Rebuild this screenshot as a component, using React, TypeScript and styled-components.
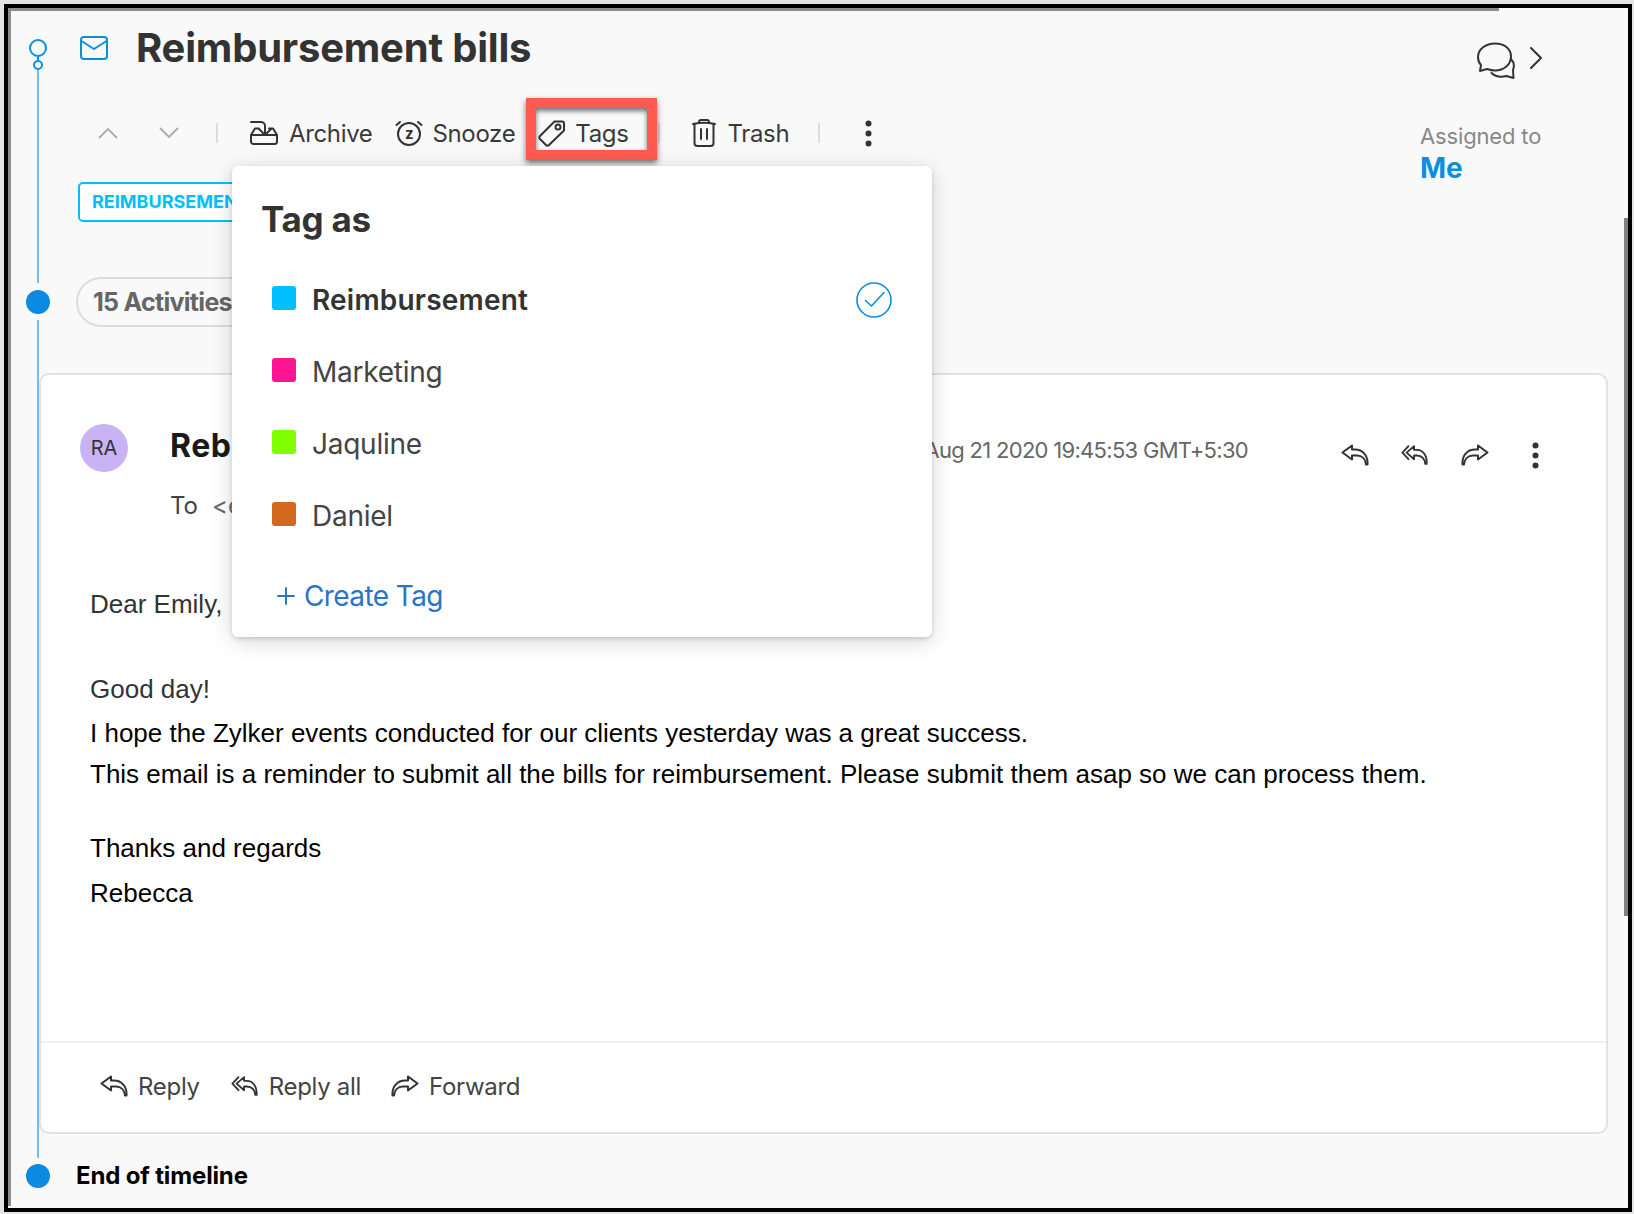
import styled, { createGlobalStyle } from 'styled-components';

const Global = createGlobalStyle`
  html, body {
    margin: 0;
    padding: 0;
    background: #e4e4e4;
  }
  * {
    box-sizing: border-box;
  }
`;

const Sheet = styled.div`
  width: 1634px;
  height: 1214px;
  padding: 4px 2px 2px 4px;
  background: #e4e4e4;
  font-family: Inter, 'Noto Sans', sans-serif;
  color: #333;
  overflow: hidden;
`;

const Frame = styled.div`
  position: relative;
  width: 1628px;
  height: 1208px;
  border: 4px solid #000;
  background: #f9f9f9;
  display: grid;
  grid-template-columns: 60px 1fr;
  overflow: hidden;

  &::before {
    content: '';
    position: absolute;
    left: 0;
    top: 0;
    width: 1488px;
    height: 1195px;
    border-top: 3px solid #8c8c8c;
    border-left: 3px solid #8c8c8c;
    pointer-events: none;
  }
`;

const ScrollGrip = styled.div`
  position: absolute;
  right: 0;
  top: 210px;
  width: 4px;
  height: 698px;
  background: #808080;
`;

const Rail = styled.div`
  display: flex;
  flex-direction: column;
  align-items: center;
  padding-top: 31px;
`;

const Ring = styled.div<{ $size: number }>`
  flex: none;
  width: ${(p) => p.$size}px;
  height: ${(p) => p.$size}px;
  border: 2.5px solid #0a8fdf;
  border-radius: 50%;
`;

const RailLine = styled.div<{ $h: number; $gap?: number; $strong?: boolean }>`
  width: 2px;
  height: ${(p) => p.$h}px;
  margin-bottom: ${(p) => p.$gap ?? 0}px;
  background: ${(p) => (p.$strong ? '#0a8fdf' : '#79b9ec')};
`;

const RailDot = styled.div<{ $gap?: number }>`
  width: 24px;
  height: 24px;
  margin-bottom: ${(p) => p.$gap ?? 0}px;
  border-radius: 50%;
  background: #0a8ae0;
`;

const Content = styled.div`
  display: flex;
  flex-direction: column;
  min-width: 0;
`;

const Top = styled.div`
  display: flex;
  height: 319px;
`;

const LeftCol = styled.div`
  flex: 1;
  min-width: 0;
`;

const TitleRow = styled.div`
  display: flex;
  align-items: center;
  gap: 28px;
  height: 48px;
  margin-top: 16px;
  padding-left: 12px;
`;

const Title = styled.h1`
  margin: 0;
  font-size: 40px;
  font-weight: 700;
  line-height: 48px;
  letter-spacing: -0.2px;
  color: #333;
`;

const Toolbar = styled.div`
  display: flex;
  align-items: center;
  height: 40px;
  margin-top: 41px;
  padding-left: 30px;
`;

const ToolButton = styled.div<{ $mr: number; $gap?: number }>`
  position: relative;
  display: flex;
  align-items: center;
  gap: ${(p) => p.$gap ?? 11}px;
  height: 40px;
  margin-right: ${(p) => p.$mr}px;
  font-size: 24px;
  color: #3a3a3a;
  letter-spacing: -0.35px;
`;

const Chevron = styled.svg<{ $mr: number }>`
  width: 20px;
  height: 12px;
  margin-right: ${(p) => p.$mr}px;
  fill: none;
  stroke: #ababab;
  stroke-width: 1.8;
`;

const Divider = styled.div<{ $mr: number }>`
  width: 2px;
  height: 20px;
  margin-right: ${(p) => p.$mr}px;
  background: #dcdcdc;
`;

const Highlight = styled.div`
  position: absolute;
  left: -12px;
  right: -28px;
  top: -15px;
  bottom: -7px;
  border: 10px solid #fe5a4f;
  box-shadow: 0 3px 6px rgba(0, 0, 0, 0.55), inset 0 3px 5px rgba(0, 0, 0, 0.55);
`;

const Chip = styled.div`
  display: inline-flex;
  align-items: center;
  height: 40px;
  margin: 29px 0 0 10px;
  padding: 0 12px 2px;
  border: 2px solid #00bfff;
  border-radius: 5px;
  font-size: 18px;
  font-weight: 700;
  color: #00bfff;
  background: #fff;
`;

const Pill = styled.div`
  width: 260px;
  height: 50px;
  margin: 55px 0 0 8px;
  padding-left: 15px;
  border: 2px solid #dcdcdc;
  border-radius: 25px;
  font-size: 25px;
  font-weight: 700;
  line-height: 46px;
  color: #666;
  letter-spacing: -0.7px;
`;

const RightCol = styled.div`
  width: 208px;
  flex: none;
`;

const ChatRow = styled.div`
  display: flex;
  align-items: flex-start;
  gap: 15px;
  height: 37px;
  margin-top: 34px;
  padding-left: 57px;
`;

const AssignedLabel = styled.div`
  margin-top: 43px;
  font-size: 22px;
  line-height: 28px;
  color: #888;
  letter-spacing: -0.15px;
`;

const AssignedName = styled.div`
  margin-top: 2px;
  font-size: 28px;
  font-weight: 700;
  line-height: 32px;
  color: #0a8fdf;
`;

const Card = styled.div`
  display: flex;
  flex-direction: column;
  width: 1569px;
  height: 761px;
  margin: 46px 0 0 -29px;
  border: 2px solid #e2e2e2;
  border-radius: 10px;
  background: #fff;
`;

const MailHead = styled.div`
  display: flex;
  align-items: flex-start;
  height: 196px;
  padding: 49px 0 0 39px;
`;

const Avatar = styled.div`
  display: flex;
  align-items: center;
  justify-content: center;
  flex: none;
  width: 48px;
  height: 48px;
  border-radius: 50%;
  background: #c9b3f5;
  font-size: 20px;
  color: #333;
`;

const Sender = styled.div`
  flex: 1;
  margin: 2px 0 0 42px;
`;

const SenderName = styled.div`
  font-size: 32px;
  font-weight: 700;
  line-height: 40px;
  color: #1a1a1a;
  letter-spacing: 0.5px;
`;

const SenderTo = styled.div`
  display: flex;
  gap: 14px;
  margin-top: 24px;
  font-size: 24px;
  line-height: 32px;
  color: #444;

  span + span {
    color: #666;
  }
`;

const MailDate = styled.div`
  margin-right: 93px;
  padding-top: 11px;
  font-size: 22px;
  line-height: 30px;
  color: #666;
  letter-spacing: -0.7px;
`;

const MailActions = styled.div`
  display: flex;
  align-items: center;
  gap: 32px;
  height: 22px;
  margin: 20px 67px 0 0;
`;

const Kebab = styled.svg<{ $ml?: number }>`
  width: 7px;
  height: 27px;
  margin-left: ${(p) => p.$ml ?? 0}px;
  fill: #333;
`;

const Body = styled.div`
  flex: 1;
  padding: 0 0 0 49px;
  font-family: 'Liberation Sans', Arial, sans-serif;
  font-size: 26px;
  line-height: 40px;
  color: #000;
`;

const Line = styled.div<{ $gap: number; $soft?: boolean }>`
  margin-top: ${(p) => p.$gap}px;
  color: ${(p) => (p.$soft ? '#333' : '#000')};
`;

const MailFooter = styled.div`
  display: flex;
  align-items: center;
  height: 91px;
  padding: 0 0 3px 59px;
  border-top: 2px solid #f0f0f0;
  font-size: 24px;
  color: #444;
`;

const FooterAction = styled.div<{ $mr: number }>`
  display: flex;
  align-items: center;
  gap: 10px;
  margin-right: ${(p) => p.$mr}px;
  letter-spacing: -0.3px;
`;

const EndRow = styled.div`
  height: 24px;
  margin: 30px 0 0 8px;
  font-size: 24px;
  font-weight: 700;
  line-height: 24px;
  color: #000;
  letter-spacing: -0.15px;
`;

const Popup = styled.div`
  position: absolute;
  left: 224px;
  top: 158px;
  width: 700px;
  height: 471px;
  padding: 29px 0 0 29px;
  border-radius: 6px;
  background: #fff;
  box-shadow: 0 2px 4px rgba(0, 0, 0, 0.14), 0 4px 22px rgba(0, 0, 0, 0.16);
`;

const PopupTitle = styled.div`
  font-size: 35px;
  font-weight: 700;
  line-height: 48px;
  color: #333;
  letter-spacing: -0.25px;
`;

const TagList = styled.div`
  margin-top: 19px;
`;

const TagRow = styled.div`
  display: flex;
  align-items: center;
  height: 72px;
  padding: 0 40px 0 11px;
`;

const Swatch = styled.div<{ $color: string }>`
  flex: none;
  width: 24px;
  height: 24px;
  border-radius: 3px;
  background: ${(p) => p.$color};
`;

const TagName = styled.div<{ $active?: boolean }>`
  flex: 1;
  margin: 4px 0 0 16px;
  font-size: 28px;
  font-weight: ${(p) => (p.$active ? 600 : 400)};
  color: ${(p) => (p.$active ? '#333' : '#444')};
  letter-spacing: ${(p) => (p.$active ? '0.2px' : '-0.25px')};
`;

const CheckMark = styled.svg`
  flex: none;
  width: 36px;
  height: 36px;
  margin-top: 4px;
  fill: none;
  stroke: #0a8fdf;
  stroke-width: 1.6;
  stroke-linecap: round;
  stroke-linejoin: round;
`;

const CreateTag = styled.div`
  display: flex;
  align-items: center;
  gap: 9px;
  margin: 22px 0 0 16px;
  height: 48px;
  font-size: 28px;
  color: #2a74c5;
  letter-spacing: -0.6px;
`;

const Icon = styled.svg<{ $flip?: boolean }>`
  flex: none;
  fill: none;
  stroke: currentColor;
  stroke-width: 2;
  stroke-linecap: round;
  stroke-linejoin: round;
  transform: ${(p) => (p.$flip ? 'scaleX(-1)' : 'none')};
`;

const ReplyIcon = ({ flip }: { flip?: boolean }) => (
  <Icon $flip={flip} width="28" height="22" viewBox="0 0 28 22" color="#333">
    <path d="M11 1.5 1.500 8.500 11 15.500v-4h5c5 0 8.500 3.500 9 9h1.500c.7-9-5-15-12.500-15H11z" />
  </Icon>
);

const ReplyAllIcon = () => (
  <Icon width="28" height="22" viewBox="0 0 30 22" color="#333">
    <path d="M8 1.500 1.500 8.500 8 15.500" />
    <path d="M14 1.500 6 8.500 14 15.500v-4h3c5 0 8.500 3.500 9 9h1.500c.7-9-4-15-10.500-15H14z" />
  </Icon>
);

const KebabIcon = ({ ml }: { ml?: number }) => (
  <Kebab $ml={ml} viewBox="0 0 7 27">
    <circle cx="3.500" cy="3.500" r="3" />
    <circle cx="3.500" cy="13.500" r="3" />
    <circle cx="3.500" cy="23.500" r="3" />
  </Kebab>
);

const tags = [
  { name: 'Reimbursement', color: '#00bfff', active: true },
  { name: 'Marketing', color: '#ff1493' },
  { name: 'Jaquline', color: '#7fff00' },
  { name: 'Daniel', color: '#d2691e' },
];

export default function App() {
  return (
    <Sheet>
      <Global />
      <Frame>
        <Rail>
          <Ring $size={18} />
          <RailLine $h={3} $strong />
          <Ring $size={10} />
          <RailLine $h={213} $gap={7} />
          <RailDot $gap={6} />
          <RailLine $h={838} $gap={6} />
          <RailDot />
        </Rail>

        <Content>
          <Top>
            <LeftCol>
              <TitleRow>
                <Icon width="28" height="24" viewBox="0 0 28 24" color="#0a8fdf">
                  <rect x="1" y="1" width="26" height="22" rx="3" />
                  <path d="M1.500 5 14 13 26.500 5" />
                </Icon>
                <Title>Reimbursement bills</Title>
              </TitleRow>

              <Toolbar>
                <Chevron $mr={41} viewBox="0 0 20 12">
                  <path d="M1 11 10 2l9 9" />
                </Chevron>
                <Chevron $mr={37} viewBox="0 0 20 12">
                  <path d="M1 1l9 9 9-9" />
                </Chevron>
                <Divider $mr={32} />
                <ToolButton $mr={23}>
                  <Icon width="28" height="24" viewBox="0 0 28 24" color="#333">
                    <path d="M9 7.500H5L1 14v6.500A2.500 2.500 0 0 0 3.500 23h21a2.500 2.500 0 0 0 2.500-2.500V14l-4-6.500h-4M1 14h26" />
                    <path d="M1 1h10a4 4 0 0 1 4 4v8M9 8l6 6 6-6" />
                  </Icon>
                  Archive
                </ToolButton>
                <ToolButton $mr={23} $gap={9}>
                  <Icon width="28" height="26" viewBox="0 0 28 26" color="#333">
                    <circle cx="14" cy="14" r="11" />
                    <path d="M5 2 1.500 5M23 2l3.500 3" />
                    <text x="14" y="19" fontSize="15" fontWeight="700" textAnchor="middle" fill="#333" stroke="none" fontFamily="Inter, sans-serif">z</text>
                  </Icon>
                  Snooze
                </ToolButton>
                <ToolButton $mr={29} $gap={9}>
                  <Highlight />
                  <Icon width="28" height="28" viewBox="0 0 28 28" color="#333">
                    <path d="M16.500 2.500 2 17a2 2 0 0 0 0 3l6 6a2 2 0 0 0 3 0l15-14.500V4.500a2 2 0 0 0-2-2z" />
                    <circle cx="20" cy="8" r="2.500" />
                  </Icon>
                  Tags
                </ToolButton>
                <Divider $mr={32} />
                <ToolButton $mr={29} $gap={12}>
                  <Icon width="24" height="28" viewBox="0 0 24 28" color="#333">
                    <path d="M1 5c7-1.500 15-1.500 22 0" />
                    <path d="M7 4V3a2 2 0 0 1 2-2h6a2 2 0 0 1 2 2v1" />
                    <path d="M2.500 5v19a3 3 0 0 0 3 3h13a3 3 0 0 0 3-3V5M9 10v10M15 10v10" />
                  </Icon>
                  Trash
                </ToolButton>
                <Divider $mr={45} />
                <KebabIcon />
              </Toolbar>

              <Chip>REIMBURSEMENT</Chip>
              <Pill>15 Activities</Pill>
            </LeftCol>

            <RightCol>
              <ChatRow>
                <Icon width="38" height="38" viewBox="0 0 38 38" color="#333">
                  <path d="M18 1.500C9 1.500 1 7 1 15c0 3 1 6 3 8l-1 6 7-2c3 1 5.500 1.500 8 1.500 9 0 16-6 16-14S27 1.500 18 1.500z" />
                  <path d="M34 17c3 3 3.500 7 2 11l.500 8-7-2c-6 1.500-11 1-15-3" />
                </Icon>
                <Icon width="12" height="22" viewBox="0 0 12 22" color="#333" style={{ marginTop: 5 }}>
                  <path d="M1 1l10 10L1 21" />
                </Icon>
              </ChatRow>
              <AssignedLabel>Assigned to</AssignedLabel>
              <AssignedName>Me</AssignedName>
            </RightCol>
          </Top>

          <Card>
            <MailHead>
              <Avatar>RA</Avatar>
              <Sender>
                <SenderName>Rebecca Anderson</SenderName>
                <SenderTo>
                  <span>To</span>
                  <span>&lt;emily@zylker.com&gt;</span>
                </SenderTo>
              </Sender>
              <MailDate>Fri Aug 21 2020 19:45:53 GMT+5:30</MailDate>
              <MailActions>
                <ReplyIcon />
                <ReplyAllIcon />
                <ReplyIcon flip />
                <KebabIcon ml={11} />
              </MailActions>
            </MailHead>

            <Body>
              <Line $gap={13} $soft>Dear Emily,</Line>
              <Line $gap={45} $soft>Good day!</Line>
              <Line $gap={4}>I hope the Zylker events conducted for our clients yesterday was a great success.</Line>
              <Line $gap={1}>This email is a reminder to submit all the bills for reimbursement. Please submit them asap so we can process them.</Line>
              <Line $gap={34}>Thanks and regards</Line>
              <Line $gap={5}>Rebecca</Line>
            </Body>

            <MailFooter>
              <FooterAction $mr={31}>
                <ReplyIcon />
                Reply
              </FooterAction>
              <FooterAction $mr={30}>
                <ReplyAllIcon />
                Reply all
              </FooterAction>
              <FooterAction $mr={0}>
                <ReplyIcon flip />
                Forward
              </FooterAction>
            </MailFooter>
          </Card>

          <EndRow>End of timeline</EndRow>
        </Content>

        <ScrollGrip />

        <Popup>
          <PopupTitle>Tag as</PopupTitle>
          <TagList>
            {tags.map((tag) => (
              <TagRow key={tag.name}>
                <Swatch $color={tag.color} />
                <TagName $active={tag.active}>{tag.name}</TagName>
                {tag.active && (
                  <CheckMark viewBox="0 0 36 36">
                    <circle cx="18" cy="18" r="17" />
                    <path d="M9.500 18.500 15.500 24 28 10.500" />
                  </CheckMark>
                )}
              </TagRow>
            ))}
          </TagList>
          <CreateTag>
            <Icon width="18" height="18" viewBox="0 0 18 18" strokeWidth="2.500">
              <path d="M9 1v16M1 9h16" />
            </Icon>
            Create Tag
          </CreateTag>
        </Popup>
      </Frame>
    </Sheet>
  );
}
